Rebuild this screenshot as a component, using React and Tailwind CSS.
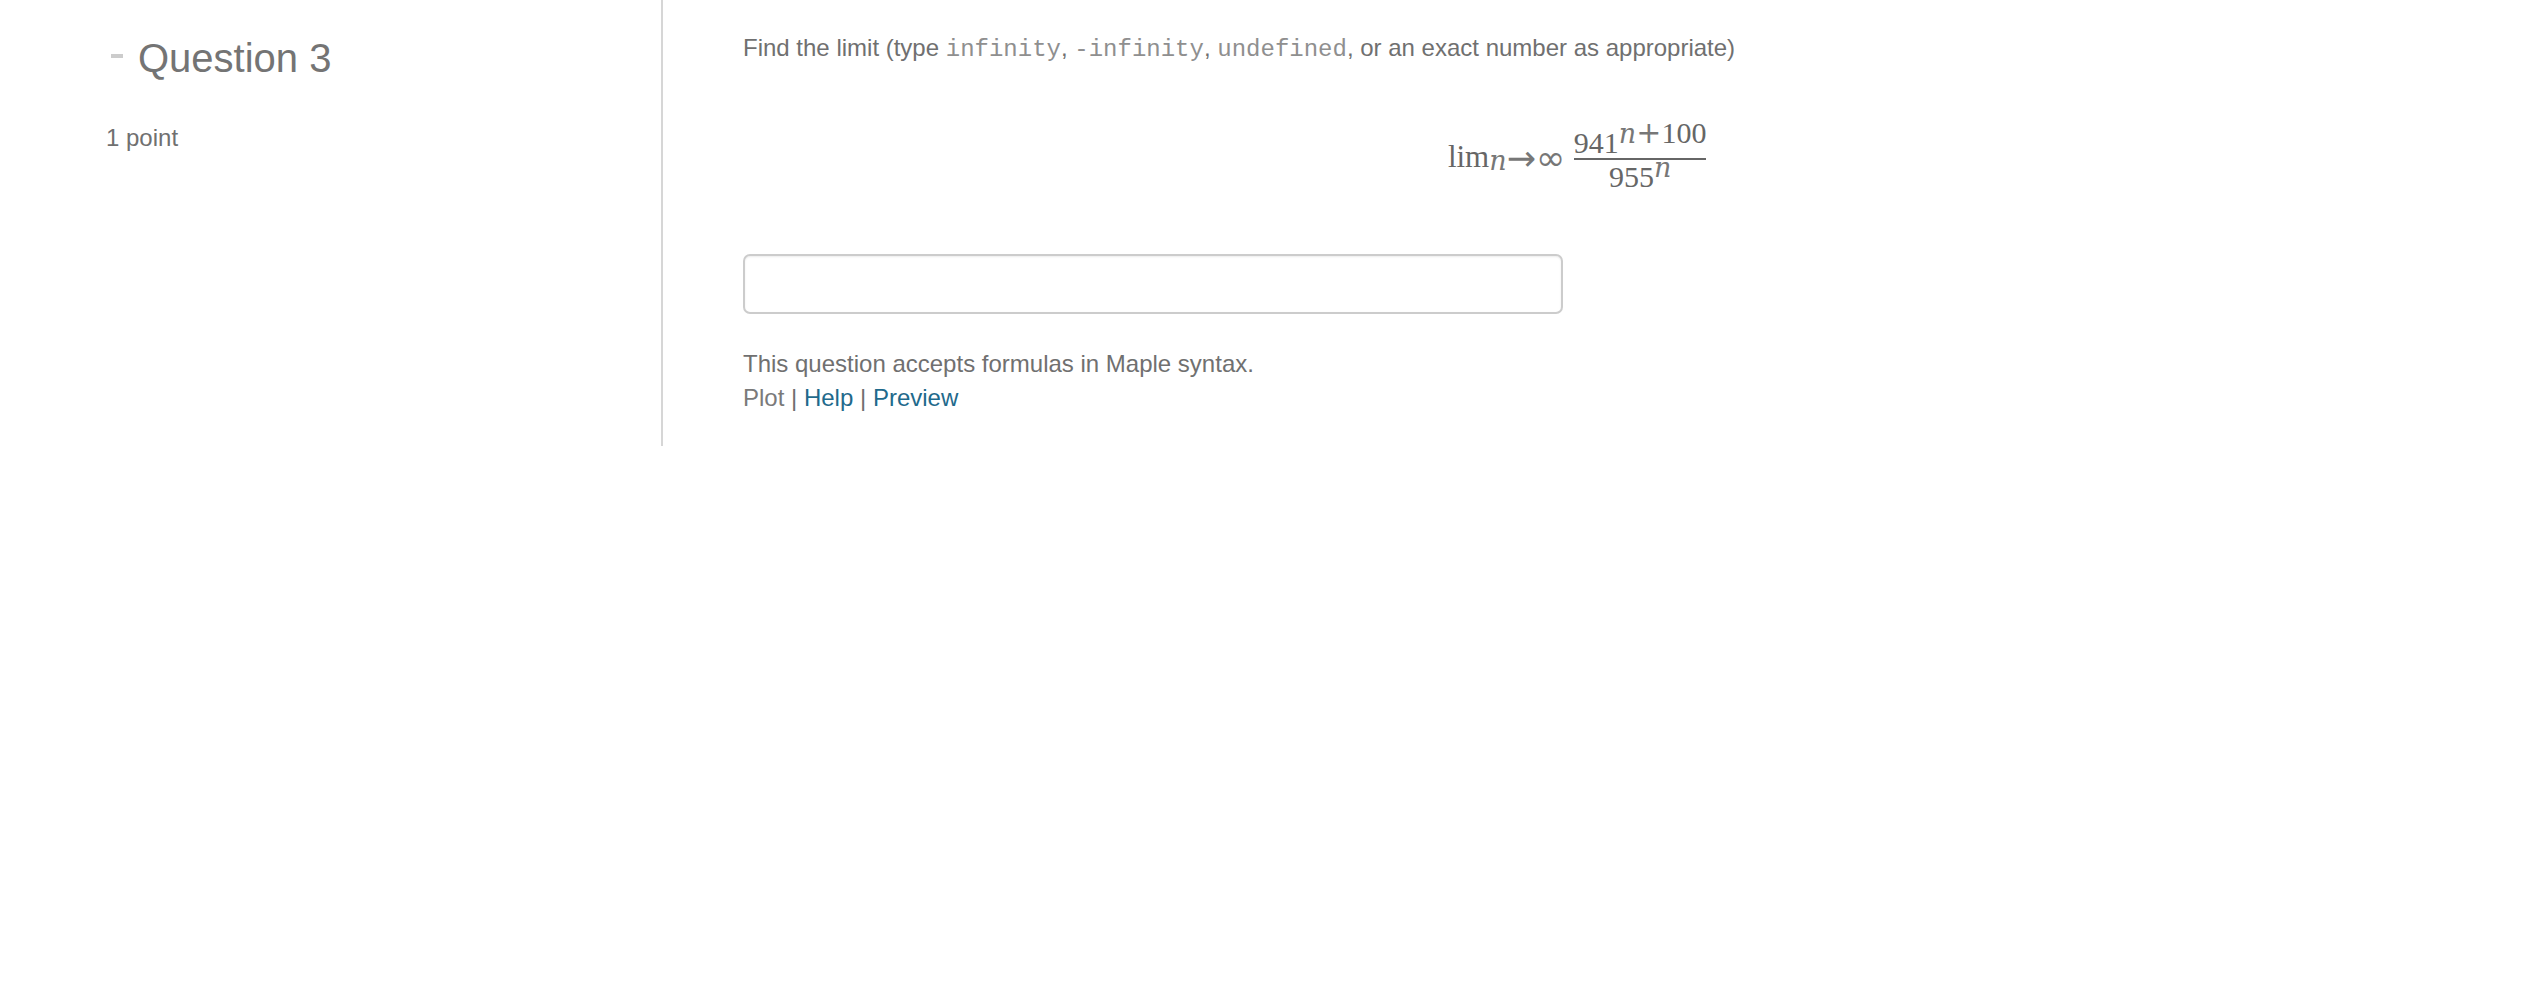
export default function App() {
  const sans = "font-['Liberation_Sans',Arial,sans-serif]";
  const mono = "font-['Liberation_Mono','Courier_New',monospace] text-[24px] text-[#8f8f8f]";
  const nVar = "font-['DejaVu_Serif',serif] italic text-[27px] text-[#777777] leading-[0px]";
  const sym = "font-['DejaVu_Sans',sans-serif] text-[#777777] leading-[0px]";
  return (
    <div className={`flex w-full min-h-[993px] items-start bg-white text-[#707070] ${sans}`}>
      <aside className="w-[663px] h-[446px] border-r-2 border-[#d6d6d6] pl-[106px] pt-[32px] shrink-0">
        <div className="flex items-center gap-[15px] h-[52px]">
          <span className="w-[12px] h-[4px] bg-[#cccccc] ml-[5px] mb-[5px]"></span>
          <h2 className="text-[40px] leading-[52px] text-[#747474]">Question 3</h2>
        </div>
        <p className="text-[24px] leading-[34px] mt-[37px]">1 point</p>
      </aside>
      <main className="flex-1 pl-[80px] pr-[116px] pt-[31px]">
        <p className="text-[24px] leading-[34px]">
          Find the limit (type <code className={mono}>infinity</code>, <code className={mono}>-infinity</code>, <code className={mono}>undefined</code>, or an exact number as appropriate)
        </p>
        <div className="flex justify-center items-center gap-[9px] h-[90px] mt-[47px] font-['Liberation_Serif','Times_New_Roman',serif] text-[30px] text-[#666666]">
          <span className="text-[31px] leading-[40px] mb-[4px] whitespace-nowrap">
            lim
            <span className="align-[-3px] leading-[0px]">
              <span className={nVar}>n</span>
              <span className={`${sym} text-[35px]`}>→∞</span>
            </span>
          </span>
          <span className="flex flex-col items-center w-[132px]">
            <span className="leading-[50px] h-[40px] whitespace-nowrap">
              941
              <span className="align-[10px] leading-[0px]">
                <span className={nVar}>n</span>
                <span className={sym}>+</span>
                100
              </span>
            </span>
            <span className="w-full h-[2px] bg-[#666666]"></span>
            <span className="leading-[34px] h-[40px] whitespace-nowrap">
              955<span className={`${nVar} align-[10px]`}>n</span>
            </span>
          </span>
        </div>
        <input type="text" aria-label="Answer" className="block w-[820px] h-[60px] mt-[50px] rounded-[7px] border-2 border-[#cccccc] bg-white shadow-[inset_0_1px_2px_rgba(0,0,0,0.08)] outline-none" />
        <p className="text-[24px] leading-[34px] mt-[33px]">This question accepts formulas in Maple syntax.</p>
        <p className="text-[24px] leading-[34px]">
          <span className="text-[#7a7a7a]">Plot</span> | <a className="text-[#1f6a8c]">Help</a> | <a className="text-[#1f6a8c]">Preview</a>
        </p>
      </main>
    </div>
  );
}
